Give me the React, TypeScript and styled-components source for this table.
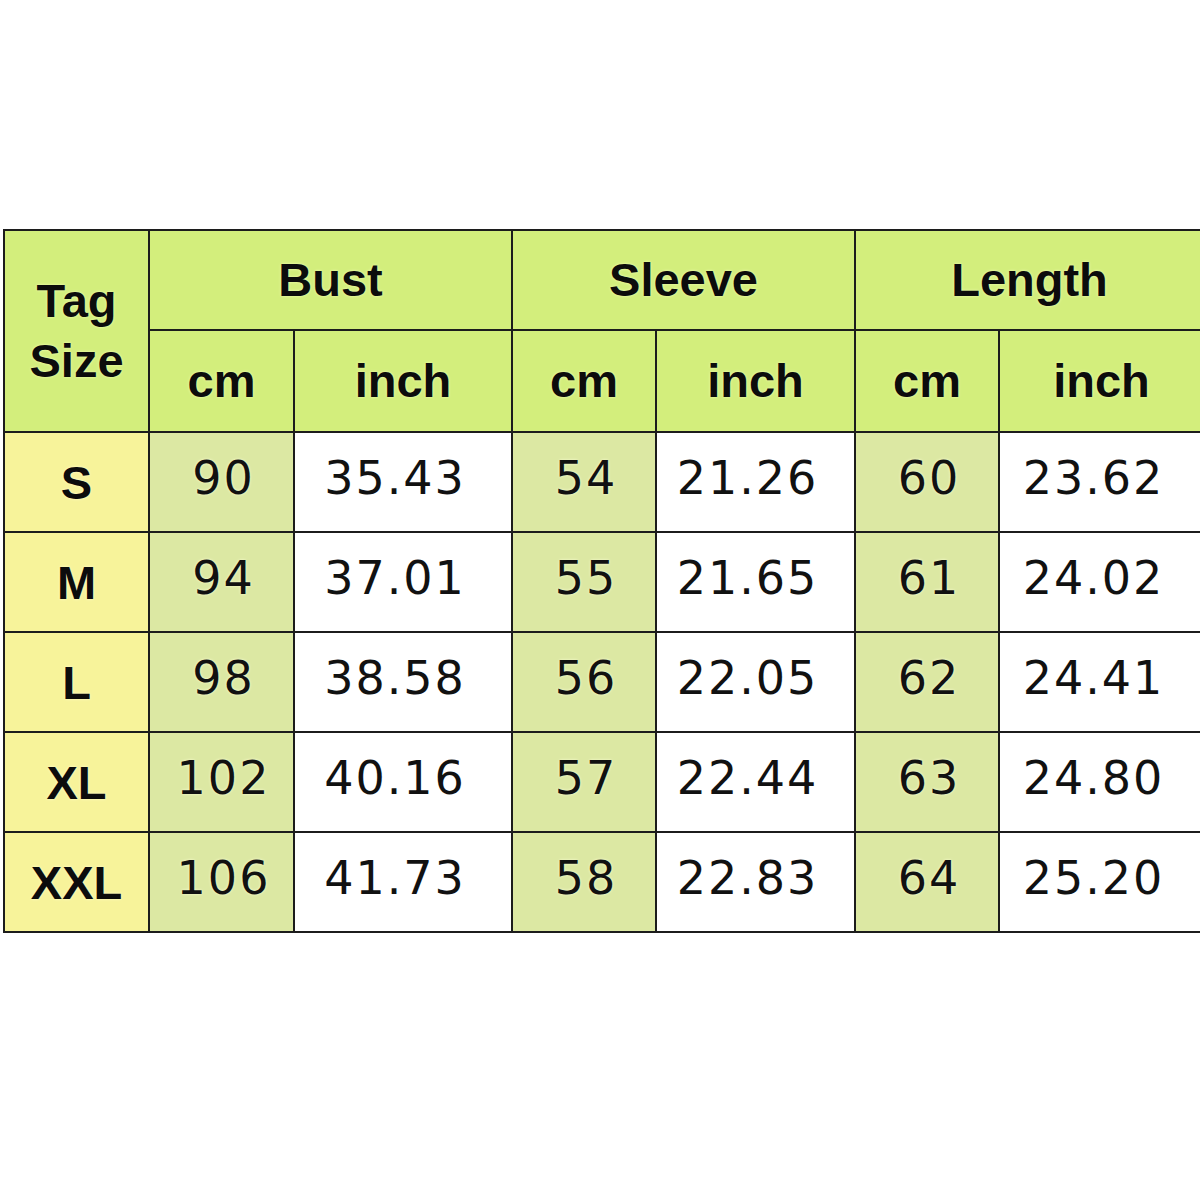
import React from 'react';
import styled, {createGlobalStyle} from 'styled-components';

const GlobalStyle = createGlobalStyle`
  html, body {
    margin: 0;
    padding: 0;
    background: #fff;
    overflow: hidden;
  }
`;

const Page = styled.div`
  width: 1200px;
  height: 1200px;
  padding: 229px 0 0 3px;
  box-sizing: border-box;
  background: #fff;
`;

const Table = styled.table`
  border-collapse: collapse;
  table-layout: fixed;
  width: 1200px;
`;

const HeadCell = styled.th<{ $h?: number }>`
  height: ${p => p.$h ?? 98}px;
  padding: 0;
  border: 2px solid #1c1c1c;
  background: #d3ee7c;
  color: #0c0c0c;
  font-family: 'Liberation Sans', Arial, sans-serif;
  font-weight: 700;
  font-size: 47px;
  line-height: 60px;
  text-align: center;
  text-shadow: 0 0 3px #f2ffb8;
`;

const SizeCell = styled.td`
  height: 98px;
  box-sizing: border-box;
  padding: 0;
  border: 2px solid #1c1c1c;
  background: #f7f39a;
  color: #0c0c0c;
  font-family: 'Liberation Sans', Arial, sans-serif;
  font-weight: 700;
  font-size: 47px;
  text-align: center;
  text-shadow: 0 0 3px #fffbd0;
`;

const ValueCell = styled.td<{ $tone: 'cm' | 'inch' }>`
  height: 90px;
  padding: ${p => (p.$tone === 'cm' ? '0 0 8px 4px' : '0 16px 8px 0')};
  border: 2px solid #1c1c1c;
  background: ${p => (p.$tone === 'cm' ? '#dce8a3' : '#ffffff')};
  color: #111;
  font-family: 'DejaVu Sans', sans-serif;
  font-weight: 400;
  font-size: 46px;
  letter-spacing: 2px;
  text-align: center;
  text-shadow: ${p => (p.$tone === 'cm' ? '0 0 3px #fbffd6' : 'none')};
`;

const cols = [145, 145, 218, 144, 199, 144, 205];

const rows = [
  ['S', '90', '35.43', '54', '21.26', '60', '23.62'],
  ['M', '94', '37.01', '55', '21.65', '61', '24.02'],
  ['L', '98', '38.58', '56', '22.05', '62', '24.41'],
  ['XL', '102', '40.16', '57', '22.44', '63', '24.80'],
  ['XXL', '106', '41.73', '58', '22.83', '64', '25.20'],
];

const App = () => {
  return (
    <>
      <GlobalStyle/>
      <Page>
        <Table>
          <colgroup>
            {cols.map((w, i) => <col key={i} style={{width: w}}/>)}
          </colgroup>
          <thead>
            <tr>
              <HeadCell rowSpan={2}>Tag<br/>Size</HeadCell>
              <HeadCell colSpan={2}>Bust</HeadCell>
              <HeadCell colSpan={2}>Sleeve</HeadCell>
              <HeadCell colSpan={2}>Length</HeadCell>
            </tr>
            <tr>
              {['cm', 'inch', 'cm', 'inch', 'cm', 'inch'].map((t, i) => (
                <HeadCell key={i} $h={100}>{t}</HeadCell>
              ))}
            </tr>
          </thead>
          <tbody>
            {rows.map(r => (
              <tr key={r[0]}>
                <SizeCell>{r[0]}</SizeCell>
                {r.slice(1).map((v, i) => (
                  <ValueCell key={i} $tone={i % 2 === 0 ? 'cm' : 'inch'}>{v}</ValueCell>
                ))}
              </tr>
            ))}
          </tbody>
        </Table>
      </Page>
    </>
  );
};

export default App;
